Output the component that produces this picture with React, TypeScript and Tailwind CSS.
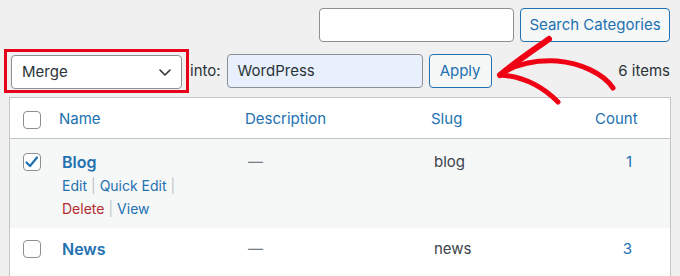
const link = 'text-[#2271b1]';
const sep = 'text-[#c3c4c7] px-[4px]';

const Checkbox = ({ checked = false }: { checked?: boolean }) => (
  <span className="flex h-[18px] w-[18px] items-center justify-center rounded-[4px] border border-[#8c8f94] bg-white">
    {checked && (
      <svg width="16" height="16" viewBox="0 0 16 16" fill="none">
        <path d="M2.5 8.5 L6 12 L13 3.5" stroke="#2271b1" strokeWidth="2.2" strokeLinecap="round" strokeLinejoin="round" />
      </svg>
    )}
  </span>
);

const cols = 'grid grid-cols-[41px_186px_186px_165px_1fr]';

export default function App() {
  return (
    <div className="relative h-[276px] w-[680px] overflow-hidden bg-[#f0f0f1] font-['Inter',sans-serif] text-[15px] text-[#2c3338]">
      {/* search */}
      <div className="flex justify-end gap-[6px] pr-[10px] pt-[8px]">
        <div className="h-[34px] w-[195px] rounded-[4px] border border-[#8c8f94] bg-white" />
        <button className="h-[34px] w-[150px] rounded-[4px] border border-[#2271b1] bg-[#f6f7f7] text-[15px] text-[#2271b1]">
          Search Categories
        </button>
      </div>

      {/* bulk actions */}
      <div className="mt-[7px] flex items-center pl-[4px] pr-[10px]">
        <div className="border-[3px] border-[#e60019] px-[4px] pb-[1px] pt-[3px]">
          <div className="flex h-[34px] w-[171px] items-center justify-between rounded-[4px] border border-[#8c8f94] bg-white pl-[10px] pr-[9px]">
            <span>Merge</span>
            <svg width="14" height="14" viewBox="0 0 14 14" fill="none">
              <path d="M2 5 L7 10 L12 5" stroke="#2c3338" strokeWidth="1.6" strokeLinecap="round" strokeLinejoin="round" />
            </svg>
          </div>
        </div>
        <span className="ml-[1px] mr-[6px]">into:</span>
        <div className="flex h-[34px] w-[196px] items-center rounded-[4px] border border-[#8c8f94] bg-[#e8f0fe] px-[10px]">
          WordPress
        </div>
        <button className="ml-[6px] h-[34px] w-[63px] rounded-[4px] border border-[#2271b1] bg-[#f6f7f7] text-[#2271b1]">
          Apply
        </button>
        <span className="ml-auto">6 items</span>
      </div>

      {/* table */}
      <div className="ml-[9px] mt-[4px] w-[662px] border border-[#c3c4c7] bg-white">
        <div className={`${cols} h-[41px] items-center border-b border-[#c3c4c7] pt-[3px] ${link}`}>
          <div className="pl-[13px]"><Checkbox /></div>
          <div className="pl-[8px]">Name</div>
          <div className="pl-[8px]">Description</div>
          <div className="pl-[8px]">Slug</div>
          <div className="pl-[7px]">Count</div>
        </div>

        <div className={`${cols} h-[89px] bg-[#f6f7f7] pt-[14px]`}>
          <div className="pl-[13px]"><Checkbox checked /></div>
          <div className="pl-[11px]">
            <div className={`font-semibold text-[16px] leading-[18px] ${link}`}>Blog</div>
            <div className="mt-[3px] text-[14px] leading-[23px]">
              <div>
                <span className={link}>Edit</span>
                <span className={sep}>|</span>
                <span className={link}>Quick Edit</span>
                <span className={sep}>|</span>
              </div>
              <div>
                <span className="text-[#b32d2e]">Delete</span>
                <span className={sep}>|</span>
                <span className={link}>View</span>
              </div>
            </div>
          </div>
          <div className="pl-[11px] leading-[18px] text-[#787c82]">—</div>
          <div className="pl-[11px] leading-[18px] text-[#3c434a]">blog</div>
          <div className={`pr-[38px] text-right leading-[18px] ${link}`}>1</div>
        </div>

        <div className={`${cols} h-[60px] pt-[12px]`}>
          <div className="pl-[13px]"><Checkbox /></div>
          <div className={`pl-[11px] font-semibold text-[16px] leading-[18px] ${link}`}>News</div>
          <div className="pl-[11px] leading-[18px] text-[#787c82]">—</div>
          <div className="pl-[11px] leading-[18px] text-[#3c434a]">news</div>
          <div className={`pr-[38px] text-right leading-[18px] ${link}`}>3</div>
        </div>
      </div>

      {/* annotation arrow */}
      <svg className="pointer-events-none absolute left-0 top-0" width="680" height="276" fill="none">
        <g stroke="#f00014" strokeLinecap="round" strokeLinejoin="round">
          <path d="M549 39 C538 47 518 60 500 75" strokeWidth="6" />
          <path d="M500 75 C515 64 535 60 557 61 C580 63 603 73 613 88" strokeWidth="5" />
          <path d="M500 75 C518 76 538 82 558 102" strokeWidth="5" />
        </g>
      </svg>
    </div>
  );
}
